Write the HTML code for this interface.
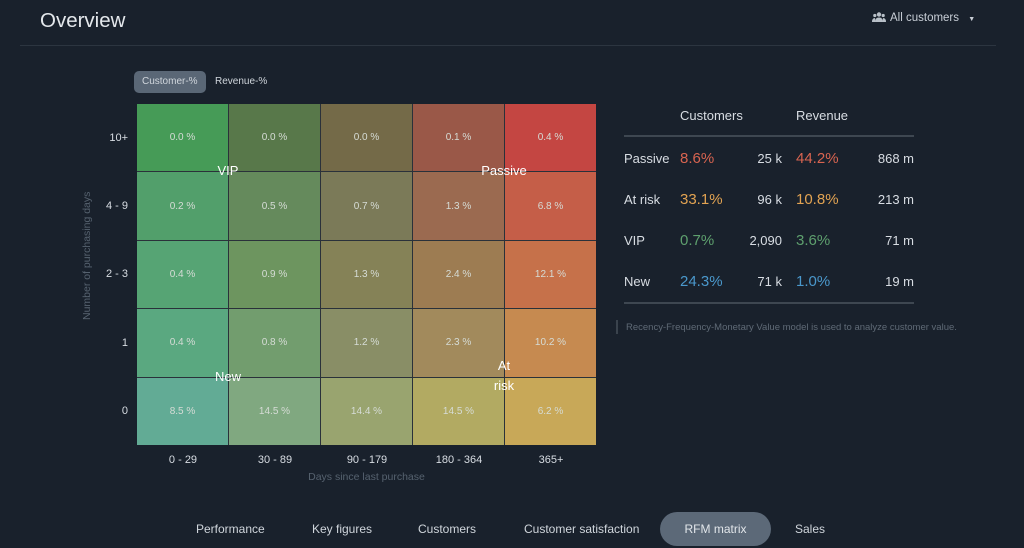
<!DOCTYPE html>
<html><head><meta charset="utf-8"><style>
*{margin:0;padding:0;box-sizing:border-box}
body{width:1024px;height:548px;background:#19212c;font-family:"Liberation Sans",sans-serif;color:#d8dde3;position:relative;overflow:hidden}
.abs{position:absolute}
h1{position:absolute;left:40px;top:9px;font-size:20.5px;font-weight:normal;color:#e4e8ec}
.hr{position:absolute;left:20px;top:45px;width:976px;height:1px;background:#2c3540}
.tog{position:absolute;top:71px;height:22px;font-size:10px;line-height:22px;padding:0 8px;border-radius:5px;color:#d0d6dc}
.grid{position:absolute;left:137px;top:104px;width:459px;height:341px;display:grid;grid-template-columns:repeat(5,1fr);grid-template-rows:repeat(5,1fr);background:#2a313a;gap:1px}
.grid div{display:flex;align-items:center;justify-content:center;font-size:10px;color:#d6dcd6}
.lbl{position:absolute;font-size:13px;color:#fff;text-align:center;line-height:20px}
.yl{position:absolute;left:100px;width:28px;text-align:right;font-size:11px;color:#d8dde3}
.xl{position:absolute;top:454px;width:92px;text-align:center;font-size:11px;color:#d8dde3}
.t{position:absolute;font-size:14px}
.nav{position:absolute;top:522px;font-size:12px;color:#d0d6dc}
</style></head><body>
<h1>Overview</h1>
<div class="abs" style="left:872px;top:12px;font-size:11.5px;color:#c8ced6">
<svg width="14" height="10" viewBox="0 0 14 10" style="vertical-align:-1px;margin-right:4px"><circle cx="7" cy="2.5" r="2.2" fill="#b8c0c8"/><circle cx="2.8" cy="3.5" r="1.6" fill="#b8c0c8"/><circle cx="11.2" cy="3.5" r="1.6" fill="#b8c0c8"/><path d="M3 10 Q3 5.5 7 5.5 Q11 5.5 11 10Z" fill="#b8c0c8"/><path d="M0 10 Q0 6 3 6 L3.5 10Z M14 10 Q14 6 11 6 L10.5 10Z" fill="#b8c0c8"/></svg>All customers <span style="font-size:7px;margin-left:6px">▼</span></div>
<div class="hr"></div>
<div class="tog" style="left:134px;background:#5a6776">Customer-%</div>
<div class="tog" style="left:207px">Revenue-%</div>

<div class="abs" style="left:81px;top:320px;transform:rotate(-90deg);transform-origin:0 0;font-size:10.5px;color:#56626f;white-space:nowrap">Number of purchasing days</div>
<div class="yl" style="top:132px">10+</div>
<div class="yl" style="top:200px">4 - 9</div>
<div class="yl" style="top:268px">2 - 3</div>
<div class="yl" style="top:337px">1</div>
<div class="yl" style="top:405px">0</div>

<div class="grid">
<div style="background:#469b57">0.0 %</div><div style="background:#58784a">0.0 %</div><div style="background:#746a48">0.0 %</div><div style="background:#9a5848">0.1 %</div><div style="background:#c44642">0.4 %</div>
<div style="background:#529f6b">0.2 %</div><div style="background:#658a5c">0.5 %</div><div style="background:#7b7a58">0.7 %</div><div style="background:#9b6a50">1.3 %</div><div style="background:#c55e48">6.8 %</div>
<div style="background:#56a474">0.4 %</div><div style="background:#6d955f">0.9 %</div><div style="background:#858257">1.3 %</div><div style="background:#9d7c52">2.4 %</div><div style="background:#c6714a">12.1 %</div>
<div style="background:#5aa880">0.4 %</div><div style="background:#729d6e">0.8 %</div><div style="background:#898e66">1.2 %</div><div style="background:#a28a5c">2.3 %</div><div style="background:#c68a50">10.2 %</div>
<div style="background:#62ab95">8.5 %</div><div style="background:#80a880">14.5 %</div><div style="background:#99a46f">14.4 %</div><div style="background:#b2aa62">14.5 %</div><div style="background:#c8a858">6.2 %</div>
</div>
<div class="lbl" style="left:208px;top:161px;width:40px">VIP</div>
<div class="lbl" style="left:474px;top:161px;width:60px">Passive</div>
<div class="lbl" style="left:208px;top:367px;width:40px">New</div>
<div class="lbl" style="left:484px;top:356px;width:40px">At<br>risk</div>

<div class="xl" style="left:137px">0 - 29</div>
<div class="xl" style="left:229px">30 - 89</div>
<div class="xl" style="left:321px">90 - 179</div>
<div class="xl" style="left:413px">180 - 364</div>
<div class="xl" style="left:505px">365+</div>
<div class="abs" style="left:137px;top:471px;width:459px;text-align:center;font-size:10.5px;color:#56626f">Days since last purchase</div>

<div class="t" style="left:680px;top:108px;font-size:13px">Customers</div>
<div class="t" style="left:796px;top:108px;font-size:13px">Revenue</div>
<div class="abs" style="left:624px;top:135px;width:290px;height:2px;background:#3e4751"></div>
<div class="abs" style="left:624px;top:302px;width:290px;height:2px;background:#3e4751"></div>

<div class="t" style="left:624px;top:151px;font-size:13px">Passive</div>
<div class="t" style="left:680px;top:150px;font-size:15px;color:#d86450">8.6%</div>
<div class="t" style="left:730px;top:151px;width:52px;text-align:right;font-size:13px">25 k</div>
<div class="t" style="left:796px;top:150px;font-size:15px;color:#d86450">44.2%</div>
<div class="t" style="left:850px;top:151px;width:64px;text-align:right;font-size:13px">868 m</div>

<div class="t" style="left:624px;top:192px;font-size:13px">At risk</div>
<div class="t" style="left:680px;top:191px;font-size:15px;color:#e2a352">33.1%</div>
<div class="t" style="left:730px;top:192px;width:52px;text-align:right;font-size:13px">96 k</div>
<div class="t" style="left:796px;top:191px;font-size:15px;color:#e2a352">10.8%</div>
<div class="t" style="left:850px;top:192px;width:64px;text-align:right;font-size:13px">213 m</div>

<div class="t" style="left:624px;top:233px;font-size:13px">VIP</div>
<div class="t" style="left:680px;top:232px;font-size:15px;color:#5ea06e">0.7%</div>
<div class="t" style="left:730px;top:233px;width:52px;text-align:right;font-size:13px">2,090</div>
<div class="t" style="left:796px;top:232px;font-size:15px;color:#5ea06e">3.6%</div>
<div class="t" style="left:850px;top:233px;width:64px;text-align:right;font-size:13px">71 m</div>

<div class="t" style="left:624px;top:274px;font-size:13px">New</div>
<div class="t" style="left:680px;top:273px;font-size:15px;color:#4a98cc">24.3%</div>
<div class="t" style="left:730px;top:274px;width:52px;text-align:right;font-size:13px">71 k</div>
<div class="t" style="left:796px;top:273px;font-size:15px;color:#4a98cc">1.0%</div>
<div class="t" style="left:850px;top:274px;width:64px;text-align:right;font-size:13px">19 m</div>

<div class="abs" style="left:616px;top:320px;width:2px;height:14px;background:#3a434d"></div>
<div class="abs" style="left:626px;top:322px;font-size:9.5px;color:#5f6a76">Recency-Frequency-Monetary Value model is used to analyze customer value.</div>

<div class="nav" style="left:196px">Performance</div>
<div class="nav" style="left:312px">Key figures</div>
<div class="nav" style="left:418px">Customers</div>
<div class="nav" style="left:524px">Customer satisfaction</div>
<div class="abs" style="left:660px;top:512px;width:111px;height:34px;border-radius:17px;background:#5c6978"></div>
<div class="nav" style="left:660px;width:111px;text-align:center;color:#e2e6ea">RFM matrix</div>
<div class="nav" style="left:795px">Sales</div>
</body></html>
